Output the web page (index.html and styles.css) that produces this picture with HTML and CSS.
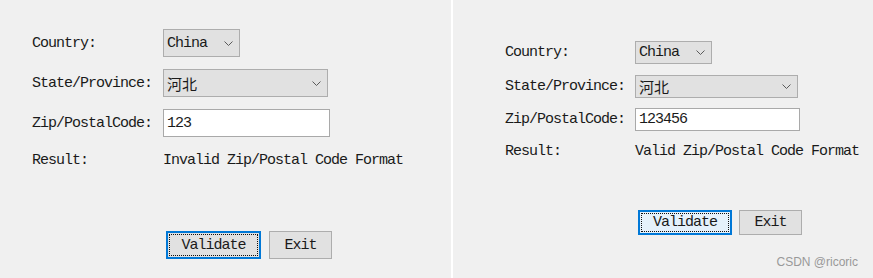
FILE: index.html
```html
<!DOCTYPE html>
<html lang="en">
<head>
  <meta charset="UTF-8" />
  <meta name="viewport" content="width=device-width, initial-scale=1.0"/>
  <title>Zip Code Validator</title>
  <link rel="stylesheet" href="styles.css">
</head>
<body>
  <div class="shots">
    <div class="panel panel-left">
      <div class="form">
        <div class="label">Country:</div>
        <div class="combo combo-small"><span>China</span><svg width="9" height="5" viewBox="0 0 9 5"><path d="M0.5 0.5 L4.5 4.5 L8.5 0.5" fill="none" stroke="#5a5a5a" stroke-width="1"/></svg></div>
        <div class="label">State/Province:</div>
        <div class="combo combo-wide"><span class="cjk">河北</span><svg width="9" height="5" viewBox="0 0 9 5"><path d="M0.5 0.5 L4.5 4.5 L8.5 0.5" fill="none" stroke="#5a5a5a" stroke-width="1"/></svg></div>
        <div class="label">Zip/PostalCode:</div>
        <div class="textbox">123</div>
        <div class="label result-row">Result:</div>
        <div class="result-row">Invalid Zip/Postal Code Format</div>
      </div>
      <div class="buttons">
        <button class="btn btn-default">Validate</button>
        <button class="btn">Exit</button>
      </div>
    </div>
    <div class="divider"></div>
    <div class="panel panel-right">
      <div class="form">
        <div class="label">Country:</div>
        <div class="combo combo-small"><span>China</span><svg width="9" height="5" viewBox="0 0 9 5"><path d="M0.5 0.5 L4.5 4.5 L8.5 0.5" fill="none" stroke="#5a5a5a" stroke-width="1"/></svg></div>
        <div class="label">State/Province:</div>
        <div class="combo combo-wide"><span class="cjk">河北</span><svg width="9" height="5" viewBox="0 0 9 5"><path d="M0.5 0.5 L4.5 4.5 L8.5 0.5" fill="none" stroke="#5a5a5a" stroke-width="1"/></svg></div>
        <div class="label">Zip/PostalCode:</div>
        <div class="textbox">123456</div>
        <div class="label result-row">Result:</div>
        <div class="result-row">Valid Zip/Postal Code Format</div>
      </div>
      <div class="buttons">
        <button class="btn btn-default">Validate</button>
        <button class="btn">Exit</button>
      </div>
      <div class="watermark">CSDN @ricoric</div>
    </div>
  </div>
</body>
</html>
```

FILE: styles.css
```css
body {
  margin: 0;
  background: #f0f0f0;
  font-family: "Liberation Mono", "Noto Sans CJK SC", monospace;
  font-size: 15px;
  letter-spacing: -1px;
  color: #1a1a1a;
}
.shots {
  display: flex;
  height: 278px;
}
.panel {
  position: relative;
  background: #f0f0f0;
}
.panel-left {
  width: 451px;
  padding: 29px 0 0 32px;
  box-sizing: border-box;
}
.divider {
  width: 2px;
  background: #ffffff;
}
.panel-right {
  flex: 1;
  padding: 41px 0 0 52px;
}
.form {
  display: grid;
  grid-template-columns: 131px auto;
  grid-auto-rows: 28px;
  row-gap: 12px;
  align-items: center;
}
.panel-right .form {
  grid-template-columns: 130px auto;
  grid-auto-rows: 23px;
  row-gap: 10.5px;
}
.label {
  white-space: nowrap;
}
.combo {
  display: flex;
  align-items: center;
  justify-content: space-between;
  height: 100%;
  box-sizing: border-box;
  background: #e1e1e1;
  border: 1px solid #adadad;
  padding: 0 6px 0 3px;
}
.combo-small {
  width: 77px;
}
.combo-wide {
  width: 165px;
}
.panel-right .combo-wide {
  width: 163px;
}
.cjk {
  font-family: "Noto Sans CJK SC", sans-serif;
  font-size: 15px;
  letter-spacing: 0;
}
.textbox {
  height: 100%;
  width: 167px;
  box-sizing: border-box;
  background: #ffffff;
  border: 1px solid #a9a9a9;
  padding: 0 3px;
  display: flex;
  align-items: center;
}
.panel-right .textbox {
  width: 165px;
}
.result-row {
  margin-top: -5px;
  white-space: nowrap;
}
.panel-right .result-row {
  margin-top: -3px;
}
.buttons {
  display: flex;
  gap: 8px;
  margin: 54px 0 0 134px;
}
.panel-right .buttons {
  gap: 7px;
  margin: 45px 0 0 133px;
}
.btn {
  font: inherit;
  letter-spacing: inherit;
  color: inherit;
  height: 28px;
  width: 63px;
  padding: 0;
  background: #e1e1e1;
  border: 1px solid #adadad;
}
.panel-right .btn {
  height: 25px;
}
.btn-default {
  width: 95px;
  background: #e5f1fb;
  border: 1px solid #0078d7;
  box-shadow: inset 0 0 0 1px #0078d7;
  outline: 1px dotted #111111;
  outline-offset: -4px;
}
.panel-left .btn-default {
  background: #e1e1e1;
}
.panel-right .btn-default {
  width: 94px;
}
.watermark {
  position: absolute;
  right: 15px;
  bottom: 9px;
  font-family: "Liberation Sans", Arial, sans-serif;
  font-size: 12px;
  letter-spacing: 0;
  color: #999999;
}
```
